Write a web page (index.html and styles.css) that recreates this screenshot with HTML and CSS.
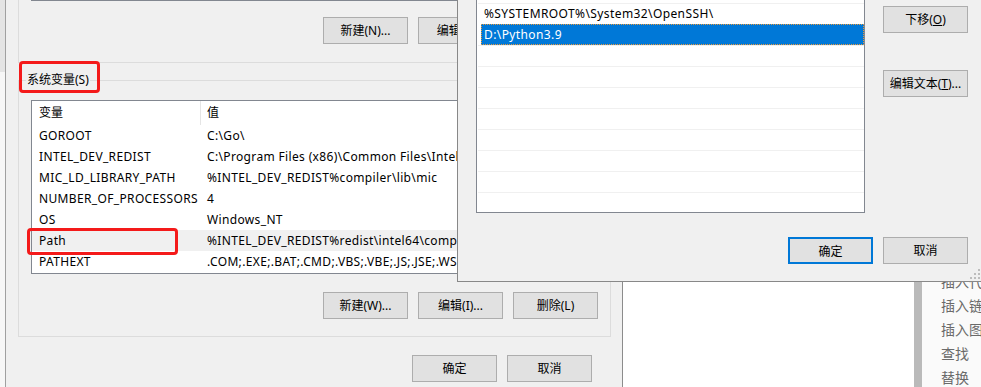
FILE: index.html
```html
<!DOCTYPE html>
<html lang="zh-CN">
<head>
    <meta charset="UTF-8">
    <title>环境变量</title>
    <link rel="stylesheet" href="styles.css">
</head>
<body>
    <div class="desk">
        <div class="edge"></div>

        <div class="env-dialog">
            <div class="group user-group">
                <div class="list-tail"></div>
                <div class="btn-row">
                    <button class="btn">新建(N)...</button>
                    <button class="btn">编辑(E)...</button>
                    <button class="btn">删除(D)</button>
                </div>
            </div>

            <div class="group sys-group">
                <span class="legend">系统变量(S)</span>
                <div class="listview">
                    <div class="lv-head">
                        <span class="c1">变量</span>
                        <span class="c2">值</span>
                    </div>
                    <div class="lv-row"><span class="c1">GOROOT</span><span class="c2">C:\Go\</span></div>
                    <div class="lv-row"><span class="c1">INTEL_DEV_REDIST</span><span class="c2">C:\Program Files (x86)\Common Files\Intel\Shared Libraries\</span></div>
                    <div class="lv-row"><span class="c1">MIC_LD_LIBRARY_PATH</span><span class="c2">%INTEL_DEV_REDIST%compiler\lib\mic</span></div>
                    <div class="lv-row"><span class="c1">NUMBER_OF_PROCESSORS</span><span class="c2">4</span></div>
                    <div class="lv-row"><span class="c1">OS</span><span class="c2">Windows_NT</span></div>
                    <div class="lv-row hover"><span class="c1">Path</span><span class="c2">%INTEL_DEV_REDIST%redist\intel64\compiler;C:\Windows\system32</span></div>
                    <div class="lv-row"><span class="c1">PATHEXT</span><span class="c2">.COM;.EXE;.BAT;.CMD;.VBS;.VBE;.JS;.JSE;.WSF;.WSH;.MSC</span></div>
                </div>
                <div class="btn-row">
                    <button class="btn">新建(W)...</button>
                    <button class="btn">编辑(I)...</button>
                    <button class="btn">删除(L)</button>
                </div>
            </div>

            <div class="btn-row foot-row">
                <button class="btn">确定</button>
                <button class="btn">取消</button>
            </div>
        </div>

        <div class="editor">
            <div class="editor-main"></div>
            <div class="scroll"></div>
            <div class="side">
                <div>插入代码</div>
                <div>插入链接</div>
                <div>插入图片</div>
                <div>查找</div>
                <div>替换</div>
            </div>
        </div>

        <div class="edit-dialog">
            <div class="edit-main">
                <div class="path-list">
                    <div class="path-row">%SystemRoot%\System32\Wbem</div>
                    <div class="path-row">%SYSTEMROOT%\System32\WindowsPowerShell\v1.0\</div>
                    <div class="path-row">%SYSTEMROOT%\System32\OpenSSH\</div>
                    <div class="path-row sel">D:\Python3.9</div>
                    <div class="path-row"></div>
                    <div class="path-row"></div>
                    <div class="path-row"></div>
                    <div class="path-row"></div>
                    <div class="path-row"></div>
                    <div class="path-row"></div>
                    <div class="path-row"></div>
                    <div class="path-row"></div>
                </div>
                <div class="edit-btns">
                    <button class="btn up">上移(<u>U</u>)</button>
                    <button class="btn down">下移(<u>O</u>)</button>
                    <button class="btn text">编辑文本(<u>T</u>)...</button>
                </div>
            </div>
            <div class="edit-foot">
                <button class="btn default">确定</button>
                <button class="btn">取消</button>
            </div>
            <svg class="grip" width="10" height="10" viewBox="0 0 10 10">
                <rect x="8" y="0" width="2" height="2" fill="#bdbdbd"/>
                <rect x="4" y="4" width="2" height="2" fill="#bdbdbd"/>
                <rect x="8" y="4" width="2" height="2" fill="#bdbdbd"/>
                <rect x="0" y="8" width="2" height="2" fill="#bdbdbd"/>
                <rect x="4" y="8" width="2" height="2" fill="#bdbdbd"/>
                <rect x="8" y="8" width="2" height="2" fill="#bdbdbd"/>
            </svg>
        </div>

        <div class="mark mark-label"></div>
        <div class="mark mark-path"></div>
    </div>
</body>
</html>
```

FILE: styles.css
```css
* {
    box-sizing: border-box;
}

body {
    margin: 0;
    background: #f0f0f0;
    font-family: "Segoe UI", "Noto Sans", "Noto Sans CJK SC", sans-serif;
    font-size: 12px;
    color: #000;
}

.desk {
    position: relative;
    width: 981px;
    height: 387px;
    overflow: hidden;
}

.edge {
    position: absolute;
    left: 0;
    top: 0;
    width: 5px;
    height: 387px;
    background: linear-gradient(#e4e4e4 0 72px, #f7f7f7 72px);
}

/* back window: environment variables */
.env-dialog {
    position: absolute;
    left: 5px;
    top: 0;
    width: 618px;
    height: 387px;
    padding-left: 12px;
    background: #f0f0f0;
    border-left: 1px solid #a0a0a0;
    border-right: 1px solid #8c8c8c;
}

.group {
    width: 593px;
    border: 1px solid #dcdcdc;
    padding: 0 12px;
}

.user-group {
    height: 63px;
    border-top: none;
}

.list-tail {
    height: 1px;
    border-bottom: 1px solid #828790;
}

.btn-row {
    display: flex;
    justify-content: flex-end;
    gap: 10px;
}

.user-group .btn-row {
    margin-top: 16px;
}

.sys-group {
    margin-top: 17px;
    height: 257px;
}

.legend {
    display: block;
    width: fit-content;
    margin: -9px 0 0 -5px;
    padding: 0 1px;
    line-height: 16px;
    background: #f0f0f0;
}

.listview {
    margin-top: 12px;
    height: 174px;
    border: 1px solid #828790;
    background: #fff;
    overflow: hidden;
}

.lv-head,
.lv-row {
    display: grid;
    grid-template-columns: 169px 1fr;
    white-space: nowrap;
}

.lv-head {
    height: 24px;
    line-height: 24px;
}

.lv-row {
    height: 21px;
    line-height: 21px;
    letter-spacing: 0.35px;
}

.c1 {
    padding-left: 7px;
    overflow: hidden;
}

.c2 {
    padding-left: 6px;
    overflow: hidden;
}

.lv-head .c1 {
    border-right: 1px solid #e5e5e5;
}

.lv-row.hover {
    background: #f0f0f0;
}

.sys-group .btn-row {
    margin-top: 18px;
}

.foot-row {
    margin-top: 18px;
    padding-right: 30px;
}

.btn {
    width: 85px;
    height: 27px;
    padding: 0;
    background: #e1e1e1;
    border: 1px solid #adadad;
    font: inherit;
    color: #000;
    line-height: 25px;
    text-align: center;
}

.btn.default {
    border: 2px solid #0078d7;
}

/* editor window behind, right side */
.editor {
    position: absolute;
    left: 623px;
    top: 240px;
    width: 358px;
    height: 147px;
    display: flex;
    background: #fff;
}

.editor-main {
    width: 291px;
}

.scroll {
    width: 8px;
    background: #bababa;
}

.side {
    flex: 1;
    padding: 29px 0 0 19px;
    background: #fafafa;
    color: #6a6a6a;
    font-family: "Noto Sans CJK SC", sans-serif;
    font-size: 14px;
    line-height: 24px;
    white-space: nowrap;
    overflow: hidden;
}

/* front window: edit path */
.edit-dialog {
    position: absolute;
    left: 457px;
    top: -60px;
    width: 525px;
    height: 342px;
    padding: 0 13px 0 18px;
    background: #f0f0f0;
    border: 1px solid #888;
}

.edit-main {
    display: flex;
    justify-content: space-between;
}

.path-list {
    margin-top: 19px;
    width: 389px;
    height: 253px;
    padding-left: 1px;
    border: 1px solid #828790;
    background: #fff;
    overflow: hidden;
}

.path-row {
    height: 21px;
    padding-left: 6px;
    border-top: 1px solid #f0f0f0;
    line-height: 20px;
    letter-spacing: 0.4px;
    white-space: nowrap;
}

.path-row.sel {
    margin-left: 3px;
    padding-left: 3px;
    background: #0078d7;
    border-top-color: #0078d7;
    color: #fff;
    outline: 1px dotted #e89a3c;
    outline-offset: -1px;
}

.edit-btns {
    display: flex;
    flex-direction: column;
}

.edit-btns .up {
    margin-top: 29px;
}

.edit-btns .down {
    margin-top: 9px;
}

.edit-btns .text {
    margin-top: 37px;
}

.edit-foot {
    display: flex;
    justify-content: flex-end;
    gap: 10px;
    margin-top: 24px;
}

.grip {
    position: absolute;
    right: 1px;
    bottom: 2px;
}

.mark {
    position: absolute;
    border: 3px solid #f41a1a;
    border-radius: 4px;
}

.mark-label {
    left: 19px;
    top: 61px;
    width: 81px;
    height: 32px;
}

.mark-path {
    left: 27px;
    top: 228px;
    width: 151px;
    height: 27px;
}
```
